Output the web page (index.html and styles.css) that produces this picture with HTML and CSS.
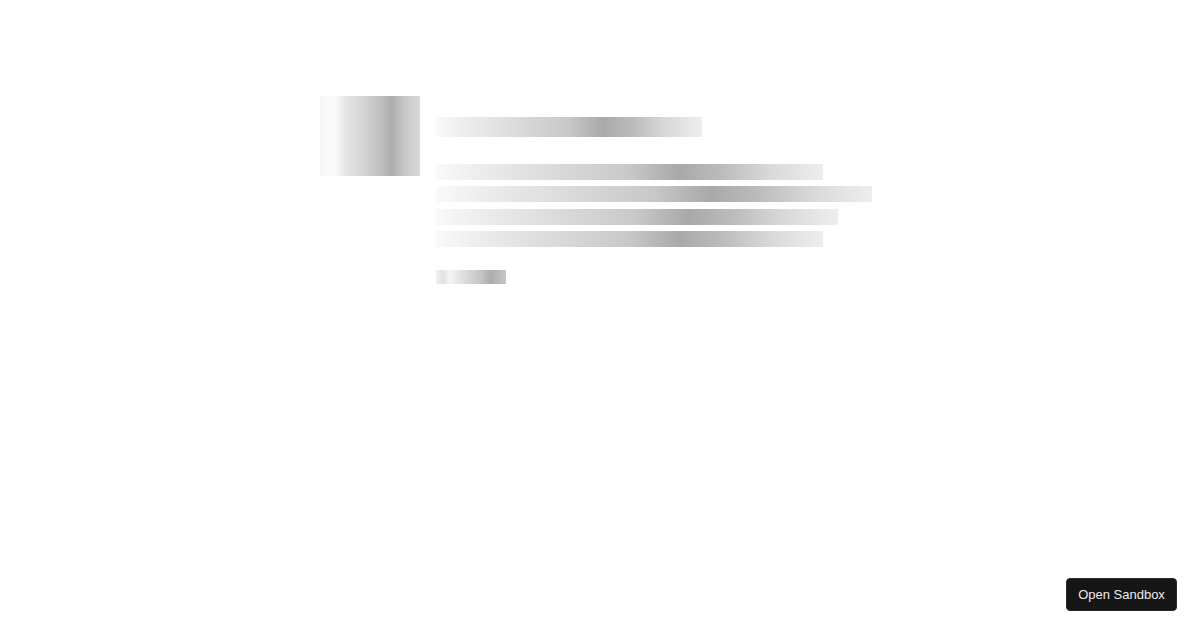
FILE: index.html
```html
<!DOCTYPE html>
<html lang="en">
<head>
<meta charset="utf-8">
<title>Loading</title>
<link rel="stylesheet" href="styles.css">
</head>
<body>
<main class="card">
  <div class="skel thumb"></div>
  <div class="body">
    <div class="skel title"></div>
    <div class="lines">
      <div class="skel line w1"></div>
      <div class="skel line w2"></div>
      <div class="skel line w3"></div>
      <div class="skel line w4"></div>
    </div>
    <div class="skel tag"></div>
  </div>
</main>
<button class="sandbox">Open Sandbox</button>
</body>
</html>
```
FILE: styles.css
```css
html, body {
  margin: 0;
  padding: 0;
  background: #ffffff;
  font-family: "Liberation Sans", Arial, sans-serif;
}

.card {
  width: 560px;
  margin: 96px auto 0;
  display: flex;
  gap: 16px;
  align-items: flex-start;
}

.skel {
  background-image: linear-gradient(90deg,
    #fafafa 0%, #f5f5f5 4%, #eeeeee 10%, #dddddd 28%, #c8c8c8 50%,
    #b4b4b4 58%, #a9a9a9 63%, #bcbcbc 74%, #d8d8d8 86%, #eeeeee 100%);
}

.thumb {
  width: 100px;
  height: 80px;
  flex: none;
  background-image: linear-gradient(90deg,
    #f6f6f6 0%, #fbfbfb 15%, #e6e6e6 25%, #d3d3d3 45%, #bdbdbd 62%,
    #adadad 72%, #c9c9c9 85%, #d9d9d9 100%);
}

.body {
  flex: 1;
  display: flex;
  flex-direction: column;
  padding-top: 21px;
}

.title {
  width: 266px;
  height: 20px;
}

.lines {
  margin-top: 27px;
  display: flex;
  flex-direction: column;
  gap: 6px;
}

.line {
  height: 16px;
}

.w1 { width: 387px; }
.w2 { width: 436px; }
.w3 { width: 402px; margin-top: 1px; }
.w4 { width: 387px; }

.tag {
  margin-top: 23px;
  width: 70px;
  height: 14px;
  background-image: linear-gradient(90deg,
    #f0f0f0 0%, #e2e2e2 10%, #f4f4f4 20%, #d8d8d8 45%, #c4c4c4 65%,
    #acacac 78%, #c6c6c6 100%);
}

.sandbox {
  position: fixed;
  right: 23px;
  bottom: 19px;
  width: 111px;
  height: 33px;
  padding: 0;
  border: 1px solid #2a2a2a;
  border-radius: 4px;
  background: #151515;
  color: #ececec;
  font-family: "Liberation Sans", Arial, sans-serif;
  font-size: 13px;
  cursor: pointer;
}
```
